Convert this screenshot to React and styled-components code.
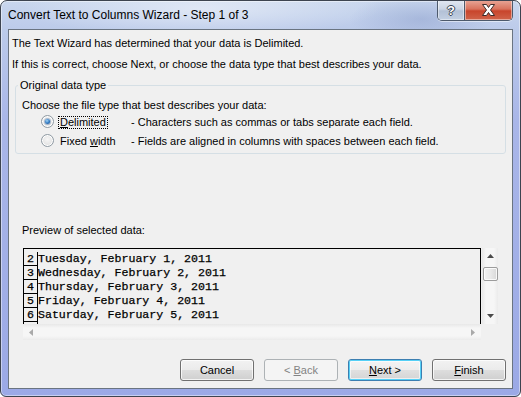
import styled, { createGlobalStyle, css } from 'styled-components'

const GlobalStyle = createGlobalStyle`
  html, body {
    margin: 0;
    padding: 0;
    background: #ffffff;
  }
  body {
    font-family: "Liberation Sans", Arial, sans-serif;
    color: #000;
  }
`

const Window = styled.div`
  box-sizing: border-box;
  width: 521px;
  height: 397px;
  display: flex;
  flex-direction: column;
  border: 1px solid #3d4450;
  border-radius: 7px 7px 6px 6px;
  overflow: hidden;
  background:
    radial-gradient(ellipse 240px 38px at 200px 8px, rgba(255, 255, 255, 0.45), rgba(255, 255, 255, 0) 75%),
    radial-gradient(ellipse 90px 30px at 420px 18px, rgba(120, 140, 190, 0.35), rgba(120, 140, 190, 0) 80%),
    linear-gradient(180deg, #c9d7ee 0px, #bccbea 28px, #a9b6e8 120px, #9ba9e6 100%);
  box-shadow: inset 0 0 0 1px rgba(255, 255, 255, 0.45);
`

const TitleBar = styled.div`
  display: flex;
  align-items: flex-start;
  height: 28px;
  padding: 0 7px;
`

const Title = styled.div`
  padding-top: 7px;
  font-size: 12px;
  line-height: 14px;
  color: #000;
`

const CaptionButtons = styled.div`
  display: flex;
  margin-left: auto;
  margin-top: -1px;
  height: 20px;
  border: 1px solid #4d5a6c;
  border-top: none;
  border-radius: 0 0 5px 5px;
  overflow: hidden;
  box-shadow: 0 1px 0 rgba(255, 255, 255, 0.5);
`

const CaptionButton = styled.div`
  display: flex;
  align-items: center;
  justify-content: center;
  height: 100%;
  box-shadow: inset 0 0 0 1px rgba(255, 255, 255, 0.45);
  ${p => p.$close ? css`
    width: 47px;
    background: linear-gradient(180deg, #e9a899 0%, #d9735d 45%, #c8452c 55%, #d0644a 100%);
  ` : css`
    width: 26px;
    border-right: 1px solid #4d5a6c;
    background: linear-gradient(180deg, #e3e9f2 0%, #cbd5e4 45%, #b3c1d6 55%, #c3d0e3 100%);
  `}
`

const HelpGlyph = styled.span`
  font: bold 13px/13px "Liberation Sans", Arial, sans-serif;
  color: #fff;
  text-shadow: -1px 0 #3a4250, 1px 0 #3a4250, 0 -1px #3a4250, 0 1px #3a4250;
`

const Client = styled.div`
  box-sizing: border-box;
  height: 360px;
  margin: 0 7px;
  border: 1px solid #6a7481;
  background: #f0f0f0;
  display: flex;
  flex-direction: column;
  font-size: 11px;
  line-height: 14px;
`

const Message = styled.p`
  margin: ${p => p.$top}px 0 0 3px;
`

const GroupBox = styled.fieldset`
  margin: 7px 6px 0 6px;
  padding: 0 0 3px 0;
  min-inline-size: 0;
  border: 1px solid #d5dfe5;
  border-radius: 3px;
`

const Legend = styled.legend`
  margin-left: 2px;
  padding: 0 2px;
  line-height: 14px;
`

const GroupBody = styled.div`
  padding: 6px 0 0 6px;
`

const OptionRow = styled.div`
  display: flex;
  align-items: center;
  height: 19px;
  padding-left: 19px;
`

const Radio = styled.span`
  box-sizing: border-box;
  display: flex;
  align-items: center;
  justify-content: center;
  width: 13px;
  height: 13px;
  margin-right: 4px;
  border-radius: 50%;
  border: 1px solid #8f9aa3;
  background: radial-gradient(circle at 50% 40%, #f6f6f6 0%, #e6e6e6 55%, #d2d2d2 100%);
  box-shadow: inset 0 0 0 1px #ffffff;
  ${p => p.$checked && css`
    &::after {
      content: '';
      width: 5px;
      height: 5px;
      border-radius: 50%;
      background: radial-gradient(circle at 40% 35%, #9fd2f5 0%, #2f78c0 55%, #1a4d8a 100%);
      box-shadow: 0 0 0 1px rgba(40, 90, 150, 0.35);
    }
  `}
`

const LabelSlot = styled.div`
  width: 73px;
`

const OptionLabel = styled.span`
  display: inline-block;
  padding: 0 1px;
  line-height: 11px;
  border: 1px dotted ${p => p.$focused ? '#000' : 'transparent'};
`

const PreviewLabel = styled.div`
  margin: 69px 0 0 13px;
`

const Preview = styled.div`
  display: grid;
  grid-template-columns: 458px 16px;
  grid-template-rows: 76px 16px;
  column-gap: 1px;
  margin: 11px 0 0 14px;
  width: 475px;
`

const DataBox = styled.div`
  box-sizing: border-box;
  overflow: hidden;
  padding-top: 3px;
  border: 1px solid #000;
  border-bottom: none;
  font-family: "Liberation Mono", "Courier New", monospace;
  font-size: 11.6px;
  line-height: 13px;
  -webkit-text-stroke: 0.25px #000;
`

const DataRow = styled.div`
  display: flex;
  height: 14px;
  white-space: pre;
`

const RowNumber = styled.div`
  box-sizing: content-box;
  width: 13px;
  height: 13px;
  border-right: 1px solid #000;
  border-bottom: 1px solid #000;
  text-align: center;
`

const RowText = styled.div`
  padding-left: 0;
`

const VScroll = styled.div`
  display: flex;
  flex-direction: column;
  align-items: center;
  background: linear-gradient(90deg, #e8e8e8 0%, #f6f6f6 25%, #f6f6f6 75%, #ebebeb 100%);
`

const HScroll = styled.div`
  display: flex;
  align-items: center;
  justify-content: space-between;
  background: linear-gradient(180deg, #e8e8e8 0%, #f6f6f6 25%, #f6f6f6 75%, #ebebeb 100%);
`

const ArrowCell = styled.div`
  display: flex;
  align-items: center;
  justify-content: center;
  width: 16px;
  height: 16px;
`

const Thumb = styled.div`
  box-sizing: border-box;
  width: 15px;
  height: 14px;
  margin-top: 3px;
  border: 1px solid #9c9c9c;
  border-radius: 2px;
  background: linear-gradient(90deg, #f3f3f3 0%, #e9e9e9 50%, #d8d8d8 100%);
  box-shadow: inset 0 0 0 1px rgba(255, 255, 255, 0.8);
`

const Spacer = styled.div`
  flex: 1;
`

const ButtonRow = styled.div`
  display: flex;
  justify-content: flex-end;
  gap: 10px;
  margin-top: 19px;
  padding-right: 6px;
`

const Button = styled.button`
  box-sizing: border-box;
  width: 74px;
  height: 22px;
  padding: 0;
  border: 1px solid #707070;
  border-radius: 3px;
  background: linear-gradient(180deg, #f2f2f2 0%, #ebebeb 48%, #dddddd 52%, #cfcfcf 100%);
  box-shadow: inset 0 0 0 1px rgba(255, 255, 255, 0.75);
  font: 11px/14px "Liberation Sans", Arial, sans-serif;
  color: #000;
  ${p => p.$default && css`
    border-color: #3c7fb1;
    background: linear-gradient(180deg, #f4f4f4 0%, #ededed 48%, #e0e0e0 52%, #d4d4d4 100%);
    box-shadow: inset 0 0 0 1px #55d0f6, inset 0 0 0 2px rgba(255, 255, 255, 0.6);
  `}
  &:disabled {
    border-color: #adb2b5;
    background: #f4f4f4;
    box-shadow: none;
    color: #838383;
  }
`

const rows = [
  ['2', 'Tuesday, February 1, 2011'],
  ['3', 'Wednesday, February 2, 2011'],
  ['4', 'Thursday, February 3, 2011'],
  ['5', 'Friday, February 4, 2011'],
  ['6', 'Saturday, February 5, 2011'],
  ['7', ''],
]

function Arrow({ dir, color }) {
  const pts = {
    up: '0,4 3.5,0 7,4',
    down: '0,0 7,0 3.5,4',
    left: '4,0 4,7 0,3.5',
    right: '0,0 4,3.5 0,7',
  }[dir]
  const vertical = dir === 'up' || dir === 'down'
  return (
    <svg width={vertical ? 7 : 4} height={vertical ? 4 : 7} viewBox={vertical ? '0 0 7 4' : '0 0 4 7'}>
      <polygon points={pts} fill={color} />
    </svg>
  )
}

function CloseGlyph() {
  return (
    <svg width="15" height="12" viewBox="0 0 15 12">
      <polygon
        points="1.5,0.5 5.5,0.5 7.5,3.5 9.5,0.5 13.5,0.5 9.5,6 13.5,11.5 9.5,11.5 7.5,8.5 5.5,11.5 1.5,11.5 5.5,6"
        fill="#ffffff"
        stroke="#3b2a28"
        strokeWidth="1"
        strokeLinejoin="round"
      />
    </svg>
  )
}

export default function App() {
  return (
    <>
      <GlobalStyle />
      <Window>
        <TitleBar>
          <Title>Convert Text to Columns Wizard - Step 1 of 3</Title>
          <CaptionButtons>
            <CaptionButton><HelpGlyph>?</HelpGlyph></CaptionButton>
            <CaptionButton $close><CloseGlyph /></CaptionButton>
          </CaptionButtons>
        </TitleBar>
        <Client>
          <Message $top={6}>The Text Wizard has determined that your data is Delimited.</Message>
          <Message $top={7}>If this is correct, choose Next, or choose the data type that best describes your data.</Message>
          <GroupBox>
            <Legend>Original data type</Legend>
            <GroupBody>
              <div>Choose the file type that best describes your data:</div>
              <OptionRow>
                <Radio $checked />
                <LabelSlot><OptionLabel $focused><u>D</u>elimited</OptionLabel></LabelSlot>
                <span>- Characters such as commas or tabs separate each field.</span>
              </OptionRow>
              <OptionRow>
                <Radio />
                <LabelSlot><OptionLabel>Fixed <u>w</u>idth</OptionLabel></LabelSlot>
                <span>- Fields are aligned in columns with spaces between each field.</span>
              </OptionRow>
            </GroupBody>
          </GroupBox>
          <PreviewLabel>Preview of selected data:</PreviewLabel>
          <Preview>
            <DataBox>
              {rows.map(([n, text]) => (
                <DataRow key={n}>
                  <RowNumber>{text ? n : ''}</RowNumber>
                  <RowText>{text}</RowText>
                </DataRow>
              ))}
            </DataBox>
            <VScroll>
              <ArrowCell><Arrow dir="up" color="#4a4a4a" /></ArrowCell>
              <Thumb />
              <Spacer />
              <ArrowCell><Arrow dir="down" color="#4a4a4a" /></ArrowCell>
            </VScroll>
            <HScroll>
              <ArrowCell><Arrow dir="left" color="#a9a9a9" /></ArrowCell>
              <ArrowCell><Arrow dir="right" color="#a9a9a9" /></ArrowCell>
            </HScroll>
          </Preview>
          <ButtonRow>
            <Button>Cancel</Button>
            <Button disabled>&lt; <u>B</u>ack</Button>
            <Button $default><u>N</u>ext &gt;</Button>
            <Button><u>F</u>inish</Button>
          </ButtonRow>
        </Client>
      </Window>
    </>
  )
}
